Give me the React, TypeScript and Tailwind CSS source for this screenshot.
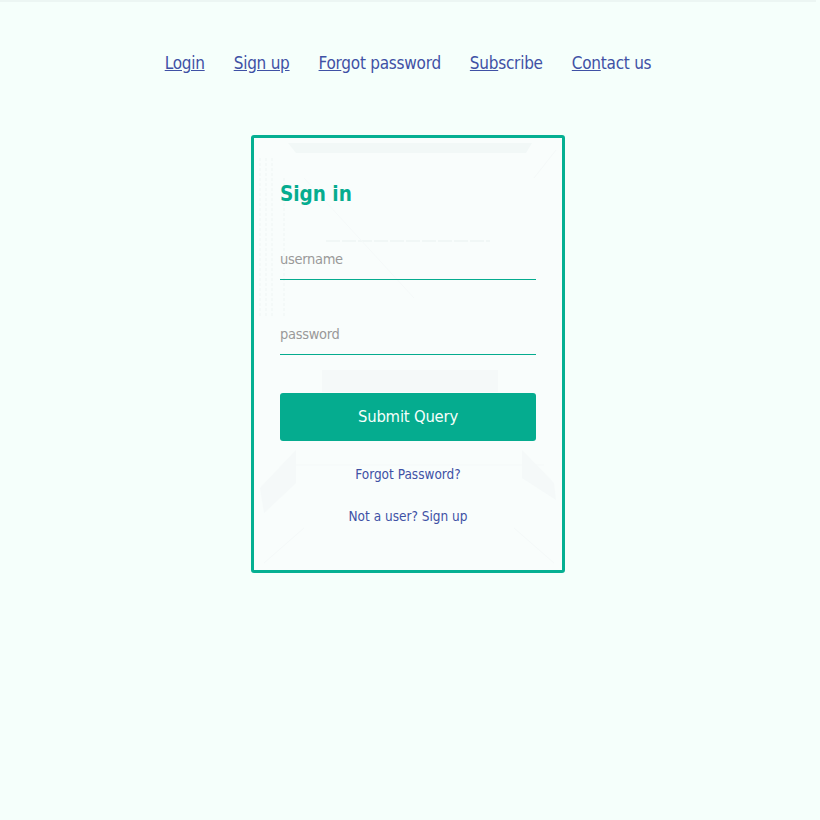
const links = [
  { head: 'Login', tail: '' },
  { head: 'Sign up', tail: '' },
  { head: 'For', tail: 'got password' },
  { head: 'Sub', tail: 'scribe' },
  { head: 'Con', tail: 'tact us' },
];

const font = "font-['DejaVu_Sans_Condensed','DejaVu_Sans',sans-serif]";

// faint picture behind the sign in card
function CardBackdrop() {
  return (
    <svg className="absolute inset-0 h-full w-full" viewBox="0 0 308 432" fill="none" aria-hidden="true">
      <path d="M34 5H278L272 15H42Z" fill="#f2f8f7" />
      <path d="M72 103H236" stroke="#f1f7f6" strokeWidth="2" strokeDasharray="14 2" />
      <path d="M68 232H244V254H68Z" fill="#f5f9f9" />
      <path d="M6 350L42 312V345L10 375Z" fill="#f5f9f9" />
      <path d="M300 345L268 312V340L302 362Z" fill="#f5f9f9" />
      <path d="M6 20V180M12 20V180M18 20V180M30 40V180" stroke="#f4f9f8" strokeWidth="2" strokeDasharray="3 2" />
      <path d="M280 40L302 12M50 40L160 160M50 390L10 425M260 390L300 425M40 327H290" stroke="#f5f9f9" />
    </svg>
  );
}

function Field({ placeholder, type }: { placeholder: string; type: string }) {
  return (
    <input
      type={type}
      placeholder={placeholder}
      className="h-[39px] w-full border-b border-[#05ac8f] bg-transparent pb-[3px] text-[14.5px] tracking-[-0.3px] text-[#444] outline-none placeholder:text-[#999]"
    />
  );
}

export default function App() {
  return (
    <div className={`min-h-[820px] bg-[#f5fffb] pr-[4px] ${font}`}>
      <div className="h-[2px] bg-[#ecf6f3]" />
      <nav className="flex justify-center gap-[29px] pt-[50px] text-[17px] leading-[22px] tracking-[-0.25px] text-[#3f51a5]">
        {links.map((l) => (
          <a key={l.head} href="#">
            <span className="underline">{l.head}</span>
            {l.tail}
          </a>
        ))}
      </nav>
      <div className="flex justify-center pt-[61px]">
        <form className="relative h-[438px] w-[314px] rounded-[3px] border-[3px] border-[#05b092] bg-[#f9fdfc]">
          <CardBackdrop />
          <div className="relative flex flex-col px-[26px] pt-[43px]">
            <h1 className="text-[20.5px] font-bold leading-[26px] text-[#05ac8f]">Sign in</h1>
            <div className="mt-[34px] flex flex-col gap-[36px]">
              <Field placeholder="username" type="text" />
              <Field placeholder="password" type="password" />
            </div>
            <button
              type="button"
              className="mt-[38px] h-[48px] w-full rounded-[3px] bg-[#05ac8f] text-[16.5px] tracking-[-0.2px] text-[#f5fffb]"
            >
              Submit Query
            </button>
            <a href="#" className="mt-[24px] text-center text-[13.5px] leading-[18px] text-[#3f51a5]">
              Forgot Password?
            </a>
            <a href="#" className="mt-[24px] text-center text-[13.5px] leading-[18px] text-[#3f51a5]">
              Not a user? Sign up
            </a>
          </div>
        </form>
      </div>
    </div>
  );
}
